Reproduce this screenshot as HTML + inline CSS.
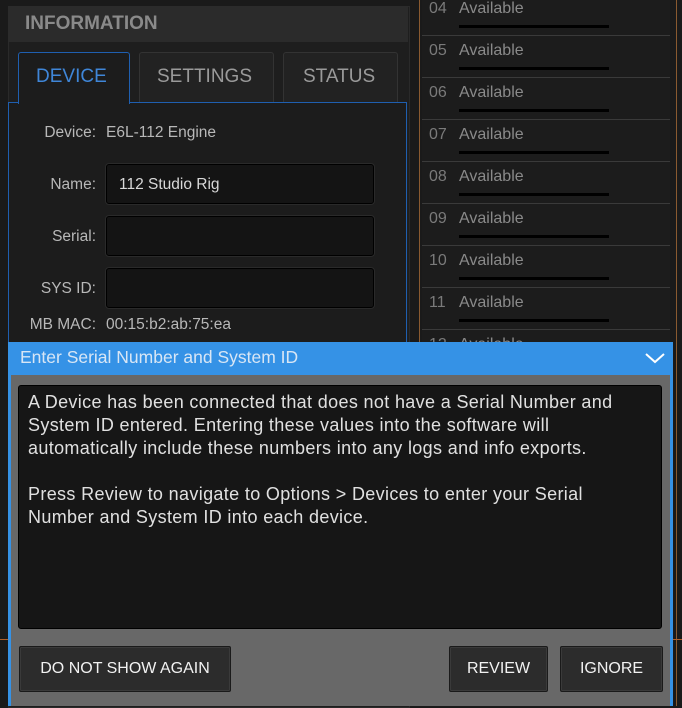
<!DOCTYPE html>
<html><head><style>
body{margin:0;width:682px;height:706px;background:#1a1a1a;font-family:"Liberation Sans",sans-serif;position:relative;overflow:hidden}
.a{position:absolute}
.lbl{color:#b8b8b8;font-size:15.5px;text-align:right;width:88px;left:8px}
.inp{left:106px;width:266px;height:38px;background:#141414;border:1px solid #000;border-radius:3px;box-shadow:0 0 0 1px #2a2a2a}
.row{left:422px;width:248px;height:41px;border-bottom:1px solid #3a3a3a;background:#1c1c1c}
.row .n{position:absolute;left:7px;top:6px;color:#7a7a7a;font-size:16px}
.row .t{position:absolute;left:37px;top:6px;color:#8a8a8a;font-size:16px}
.row .b{position:absolute;left:37px;top:31px;width:150px;height:3px;background:#000}
.btn{background:#2c2c2c;border:1px solid #1a1a1a;border-radius:2px;color:#f2f2f2;font-size:16px;text-align:center;line-height:44px;height:44px;top:646px;box-shadow:inset 0 0 0 1px #3a3a3a}
</style></head><body>
<div class="a" style="left:8px;top:6px;width:400px;height:700px;background:#1e1e1e;border:1px solid #2a2a2a"></div>
<div class="a" style="left:8px;top:6px;width:400px;height:36px;background:#2b2b2b"></div>
<div class="a" style="left:25px;top:13px;color:#8a8a8a;font-size:19px;font-weight:bold">INFORMATION</div>
<div class="a" style="left:139px;top:52px;width:133px;height:50px;background:#222;border:1px solid #333;border-radius:3px 3px 0 0"></div>
<div class="a" style="left:283px;top:52px;width:113px;height:50px;background:#222;border:1px solid #333;border-radius:3px 3px 0 0"></div>
<div class="a" style="left:157px;top:66px;color:#9a9a9a;font-size:19px">SETTINGS</div>
<div class="a" style="left:303px;top:66px;color:#9a9a9a;font-size:19px">STATUS</div>
<div class="a" style="left:8px;top:102px;width:397px;height:260px;border:1px solid #1f5fb0;border-bottom:none;background:#1c1c1c"></div>
<div class="a" style="left:18px;top:52px;width:110px;height:51px;background:#1c1c1c;border:1px solid #1f5fb0;border-bottom:none;border-radius:3px 3px 0 0"></div>
<div class="a" style="left:36px;top:66px;color:#3f86d8;font-size:19px">DEVICE</div>
<div class="a lbl" style="top:124px">Device:</div>
<div class="a" style="left:106px;top:124px;color:#b8b8b8;font-size:15.5px">E6L-112 Engine</div>
<div class="a lbl" style="top:176px">Name:</div>
<div class="a inp" style="top:164px"></div>
<div class="a" style="left:119px;top:176px;color:#d8d8d8;font-size:15.5px">112 Studio Rig</div>
<div class="a lbl" style="top:228px">Serial:</div>
<div class="a inp" style="top:216px"></div>
<div class="a lbl" style="top:280px">SYS ID:</div>
<div class="a inp" style="top:268px"></div>
<div class="a lbl" style="top:316px">MB MAC:</div>
<div class="a" style="left:106px;top:316px;color:#b8b8b8;font-size:15.5px">00:15:b2:ab:75:ea</div>

<div class="a" style="left:419px;top:0;width:256px;height:706px;border-left:1px solid #8a5a30;border-right:1px solid #8a5a30;background:#1a1a1a"></div>
<div class="a row" style="top:-6px"><span class="n">04</span><span class="t">Available</span><span class="b"></span></div>
<div class="a row" style="top:36px"><span class="n">05</span><span class="t">Available</span><span class="b"></span></div>
<div class="a row" style="top:78px"><span class="n">06</span><span class="t">Available</span><span class="b"></span></div>
<div class="a row" style="top:120px"><span class="n">07</span><span class="t">Available</span><span class="b"></span></div>
<div class="a row" style="top:162px"><span class="n">08</span><span class="t">Available</span><span class="b"></span></div>
<div class="a row" style="top:204px"><span class="n">09</span><span class="t">Available</span><span class="b"></span></div>
<div class="a row" style="top:246px"><span class="n">10</span><span class="t">Available</span><span class="b"></span></div>
<div class="a row" style="top:288px"><span class="n">11</span><span class="t">Available</span><span class="b"></span></div>
<div class="a row" style="top:330px"><span class="n">12</span><span class="t">Available</span><span class="b"></span></div>
<div class="a" style="left:0;top:639px;width:682px;height:1px;background:#b0602a"></div>

<div class="a" style="left:8px;top:342px;width:665px;height:364px;background:#3592e6"></div>
<div class="a" style="left:11px;top:375px;width:659px;height:331px;background:#686868"></div>
<div class="a" style="left:20px;top:347px;color:#d8e6f5;font-size:17.5px">Enter Serial Number and System ID</div>
<svg class="a" style="left:644px;top:351px" width="22" height="14"><path d="M2 3 L11 11 L20 3" stroke="#fff" stroke-width="2" fill="none"/></svg>
<div class="a" style="left:18px;top:385px;width:642px;height:242px;background:#161616;border:1px solid #000;border-radius:3px"></div>
<div class="a" style="left:28px;top:391px;width:625px;color:#e0e0e0;font-size:18px;line-height:23px;letter-spacing:0.35px">A Device has been connected that does not have a Serial Number and System ID entered. Entering these values into the software will automatically include these numbers into any logs and info exports.<br><br>Press Review to navigate to Options &gt; Devices to enter your Serial Number and System ID into each device.</div>
<div class="a btn" style="left:19px;width:210px">DO NOT SHOW AGAIN</div>
<div class="a btn" style="left:449px;width:97px">REVIEW</div>
<div class="a btn" style="left:560px;width:101px">IGNORE</div>
</body></html>
